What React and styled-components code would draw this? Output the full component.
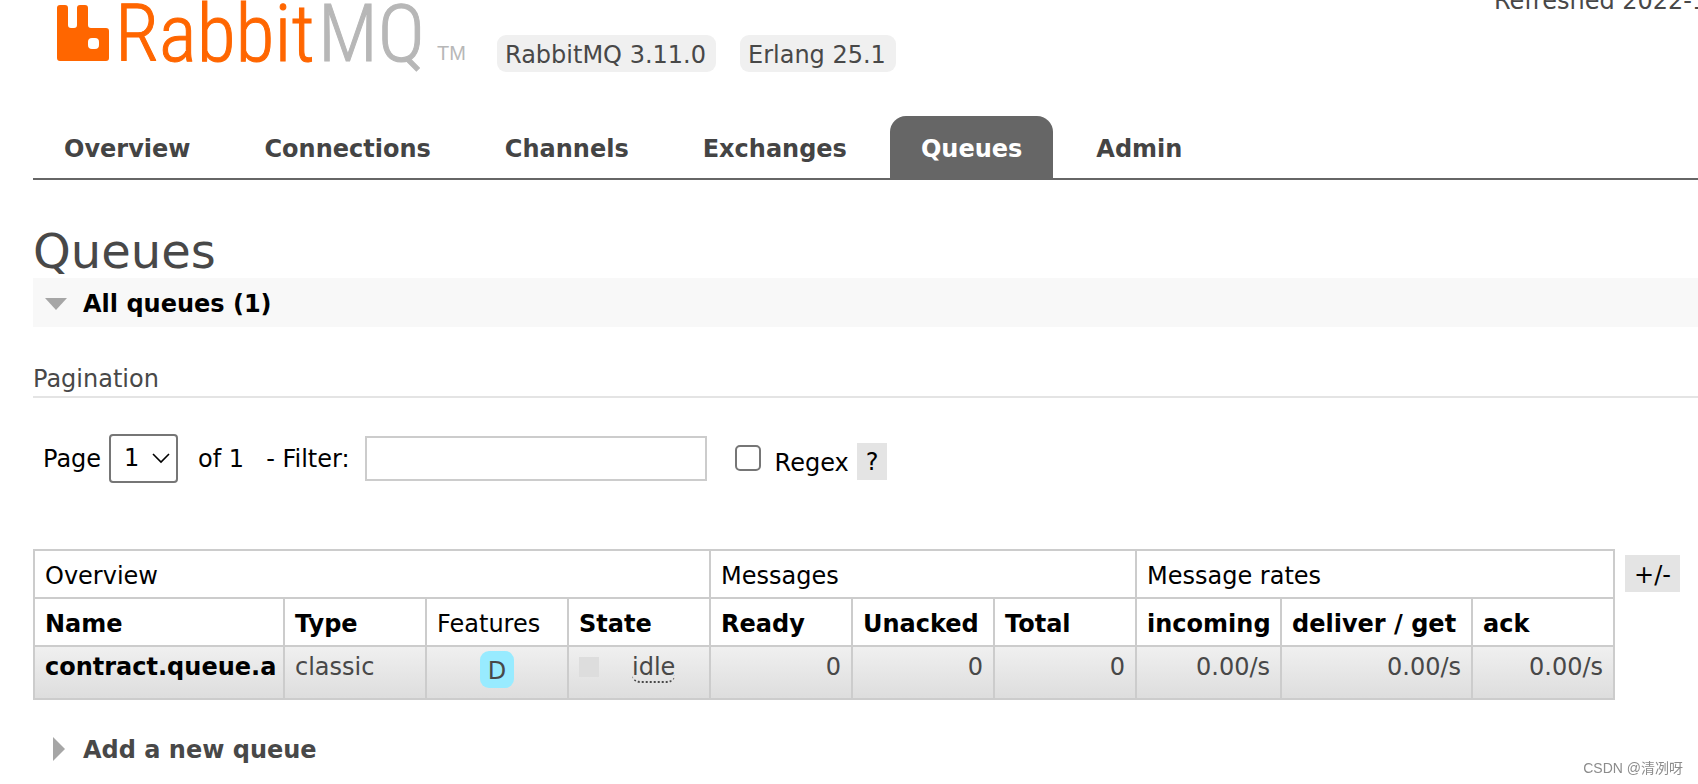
import React from "react";
import styled, { createGlobalStyle } from "styled-components";

const GlobalStyle = createGlobalStyle`
  * {
    box-sizing: border-box;
  }
  body {
    margin: 0;
    background: #fff;
    color: #484848;
    font: 24px/28px Verdana, "DejaVu Sans", sans-serif;
    overflow-x: hidden;
  }
`;

const Page = styled.div`
  padding-left: 33px;
  overflow: hidden;
`;

const Header = styled.header`
  display: flex;
  align-items: flex-start;
  height: 116px;
`;

const Logo = styled.svg`
  flex: none;
  width: 440px;
  height: 80px;
  margin-right: 24px;
  overflow: visible;
`;

const LogoText = styled.text`
  font-family: "Roboto Condensed", Roboto, sans-serif;
  font-size: 80px;
  font-weight: 300;
  fill: ${(props) => props.$color};
  stroke: ${(props) => props.$color};
`;

const TradeMark = styled.text`
  font-family: "Liberation Sans", Arial, sans-serif;
  font-size: 20px;
  fill: #b7b7b7;
`;

const Versions = styled.div`
  display: flex;
  gap: 24px;
  padding-top: 35px;
`;

const Version = styled.span`
  padding: 6px 10px 3px 8px;
  border-radius: 9px;
  background: #f0f0f0;
  white-space: nowrap;
`;

const Refreshed = styled.div`
  flex: none;
  width: 204px;
  margin: -13px 0 0 auto;
  overflow: hidden;
  white-space: nowrap;
`;

const Tabs = styled.nav`
  display: flex;
  gap: 12px;
  border-bottom: 2px solid #666;
`;

const Tab = styled.a`
  padding: 19px 31px 15px;
  border-radius: 16px 16px 0 0;
  background: ${(props) => (props.$active ? "#666" : "transparent")};
  color: ${(props) => (props.$active ? "#fff" : "#444")};
  font-weight: bold;
  text-decoration: none;
`;

const Title = styled.h1`
  margin: 45px 0 0;
  font-size: 48px;
  line-height: 53px;
  font-weight: normal;
`;

const SectionHeading = styled.h2`
  display: flex;
  align-items: center;
  margin: 0;
  padding-top: 2px;
  height: 49px;
  background: ${(props) => (props.$open ? "#f8f8f8" : "transparent")};
  color: ${(props) => (props.$open ? "#000" : "#484848")};
  font-size: 24px;
`;

const ArrowBox = styled.svg`
  width: 26px;
  height: 26px;
  margin: 0 14px 0 10px;
`;

const SubHeading = styled.h3`
  margin: 38px 0 0;
  padding-bottom: 3px;
  border-bottom: 2px solid #e4e4e4;
  font-size: 24px;
  font-weight: normal;
`;

const FilterBar = styled.form`
  display: flex;
  align-items: center;
  height: 50px;
  margin: 35px 0 66px;
  padding-left: 10px;
  color: #000;

  > label,
  > span:not(:has(*)) {
    padding-top: 2px;
  }
`;

const PageSelect = styled.span`
  display: grid;
  align-items: center;
  margin: 0 20px 0 8px;

  > * {
    grid-area: 1 / 1;
  }
  svg {
    justify-self: end;
    margin-right: 8px;
    pointer-events: none;
  }
`;

const Select = styled.select`
  appearance: none;
  width: 69px;
  height: 49px;
  padding: 0 0 0 13px;
  border: 2px solid #767676;
  border-radius: 4px;
  background: #fff;
  color: #000;
  font: inherit;
`;

const FilterLabel = styled.label`
  margin-left: 22px;
`;

const FilterInput = styled.input`
  width: 342px;
  height: 45px;
  margin: 0 28px 0 15px;
  padding: 0 8px;
  border: 2px solid #ccc;
  font: inherit;
`;

const Checkbox = styled.input`
  appearance: none;
  width: 26px;
  height: 26px;
  margin: 0 14px 0 0;
  border: 2px solid #767676;
  border-radius: 5px;
`;

const RegexGroup = styled.span`
  display: flex;
  align-items: center;
  gap: 8px;
  padding-top: 6px;

  label {
    padding-top: 4px;
  }
`;

const GreyButton = styled.button`
  height: 37px;
  padding: 2px 9px 0;
  border: none;
  background: #e4e4e4;
  color: #000;
  font: inherit;
`;

const TableArea = styled.div`
  display: flex;
  align-items: flex-start;
  gap: 10px;

  > button {
    flex: none;
    margin-top: 6px;
  }
`;

const QueueTable = styled.table`
  flex: none;
  width: 1582px;
  table-layout: fixed;
  border-collapse: collapse;
`;

const Head = styled.th`
  padding: 11px 8px 7px 10px;
  border: 2px solid #ccc;
  color: #000;
  font-weight: ${(props) => (props.$sortable ? "bold" : "normal")};
  text-align: left;
  white-space: nowrap;
`;

const Row = styled.tr`
  height: 53px;
  background: linear-gradient(#f0f0f0, #ddd);
`;

const Cell = styled.td`
  padding: 6px 10px 0;
  border: 2px solid #ccc;
  text-align: ${(props) => props.$align || "left"};
  vertical-align: top;
  white-space: nowrap;
`;

const QueueLink = styled.a`
  color: #000;
  font-weight: bold;
  text-decoration: none;
`;

const Feature = styled.abbr`
  display: inline-block;
  padding: 6px 8px 3px;
  border-radius: 9px;
  background: #98ebff;
  text-decoration: none;
`;

const FeatureCell = styled(Cell)`
  padding-top: 4px;
  text-align: center;
`;

const State = styled.span`
  display: flex;
  align-items: flex-start;
  gap: 33px;
`;

const StateColor = styled.span`
  width: 20px;
  height: 20px;
  margin-top: 4px;
  background: #ddd;
`;

const StateText = styled.span`
  border-bottom: 2px dotted #484848;
  border-radius: 0 0 8px 8px;
`;

const AddSection = styled.div`
  margin-top: 24px;
`;

const Watermark = styled.div`
  position: fixed;
  right: 15px;
  bottom: 6px;
  color: #8c8c8c;
  font: 14px/20px "Liberation Sans", "Noto Sans CJK SC", sans-serif;
`;

const tabs = ["Overview", "Connections", "Channels", "Exchanges", "Queues", "Admin"];

const columns = [
  { name: "Name", width: 250, sortable: true },
  { name: "Type", width: 142, sortable: true },
  { name: "Features", width: 142 },
  { name: "State", width: 142, sortable: true },
  { name: "Ready", width: 142, sortable: true },
  { name: "Unacked", width: 142, sortable: true },
  { name: "Total", width: 142, sortable: true },
  { name: "incoming", width: 145, sortable: true },
  { name: "deliver / get", width: 191, sortable: true },
  { name: "ack", width: 142, sortable: true },
];

const counts = ["0", "0", "0", "0.00/s", "0.00/s", "0.00/s"];

const Arrow = ({ open }) => (
  <ArrowBox viewBox="0 0 26 26" aria-hidden="true">
    <path d={open ? "M2 7h22l-11 12z" : "M10 0l12 12-12 12z"} fill="#a6a6a6" />
  </ArrowBox>
);

const RabbitLogo = () => (
  <Logo viewBox="33 0 440 80" role="img" aria-label="RabbitMQ">
    <path
      fill="#f60"
      fillRule="evenodd"
      d="M60 5h5q3 0 3 3v17q0 3 3 3h3q3 0 3-3V8q0-3 3-3h5q3 0 3 3v17q0 3 3 3h15q3 0 3 3v27q0 3-3 3H60q-3 0-3-3V8q0-3 3-3zM92 38q-4 0-4 4v3q0 4 4 4h3q4 0 4-4v-3q0-4-4-4z"
    />
    <LogoText x="115" y="61" $color="#f60">
      Rabbit
    </LogoText>
    <LogoText x="318" y="61" $color="#b7b7b7">
      MQ
    </LogoText>
    <TradeMark x="437" y="60">
      TM
    </TradeMark>
  </Logo>
);

export default function App() {
  return (
    <Page>
      <GlobalStyle />
      <Header>
        <RabbitLogo />
        <Versions>
          <Version>RabbitMQ 3.11.0</Version>
          <Version>Erlang 25.1</Version>
        </Versions>
        <Refreshed>Refreshed 2022-1</Refreshed>
      </Header>
      <Tabs>
        {tabs.map((tab) => (
          <Tab key={tab} href={"#/" + tab.toLowerCase()} $active={tab === "Queues"}>
            {tab}
          </Tab>
        ))}
      </Tabs>

      <Title>Queues</Title>
      <SectionHeading $open>
        <Arrow open />
        All queues (1)
      </SectionHeading>

      <SubHeading>Pagination</SubHeading>
      <FilterBar>
        <label htmlFor="page">Page</label>
        <PageSelect>
          <Select id="page" defaultValue="1">
            <option>1</option>
          </Select>
          <svg width="18" height="12" viewBox="0 0 18 12" fill="none" stroke="#000" strokeWidth="1.6">
            <path d="M1 2l8 8 8-8" />
          </svg>
        </PageSelect>
        <span>of 1</span>
        <FilterLabel htmlFor="filter">- Filter:</FilterLabel>
        <FilterInput id="filter" type="text" />
        <Checkbox id="regex" type="checkbox" />
        <RegexGroup>
          <label htmlFor="regex">Regex</label>
          <GreyButton type="button">?</GreyButton>
        </RegexGroup>
      </FilterBar>

      <TableArea>
        <QueueTable>
          <colgroup>
            {columns.map((column) => (
              <col key={column.name} width={column.width} />
            ))}
          </colgroup>
          <thead>
            <tr>
              <Head colSpan={4}>Overview</Head>
              <Head colSpan={3}>Messages</Head>
              <Head colSpan={3}>Message rates</Head>
            </tr>
            <tr>
              {columns.map((column) => (
                <Head key={column.name} $sortable={column.sortable}>
                  {column.name}
                </Head>
              ))}
            </tr>
          </thead>
          <tbody>
            <Row>
              <Cell>
                <QueueLink href="#/queues/contract.queue.a">contract.queue.a</QueueLink>
              </Cell>
              <Cell>classic</Cell>
              <FeatureCell>
                <Feature>D</Feature>
              </FeatureCell>
              <Cell>
                <State>
                  <StateColor />
                  <StateText>idle</StateText>
                </State>
              </Cell>
              {counts.map((count, i) => (
                <Cell key={i} $align="right">
                  {count}
                </Cell>
              ))}
            </Row>
          </tbody>
        </QueueTable>
        <GreyButton type="button">+/-</GreyButton>
      </TableArea>

      <AddSection>
        <SectionHeading>
          <Arrow />
          Add a new queue
        </SectionHeading>
      </AddSection>
      <Watermark>CSDN @清冽呀</Watermark>
    </Page>
  );
}
